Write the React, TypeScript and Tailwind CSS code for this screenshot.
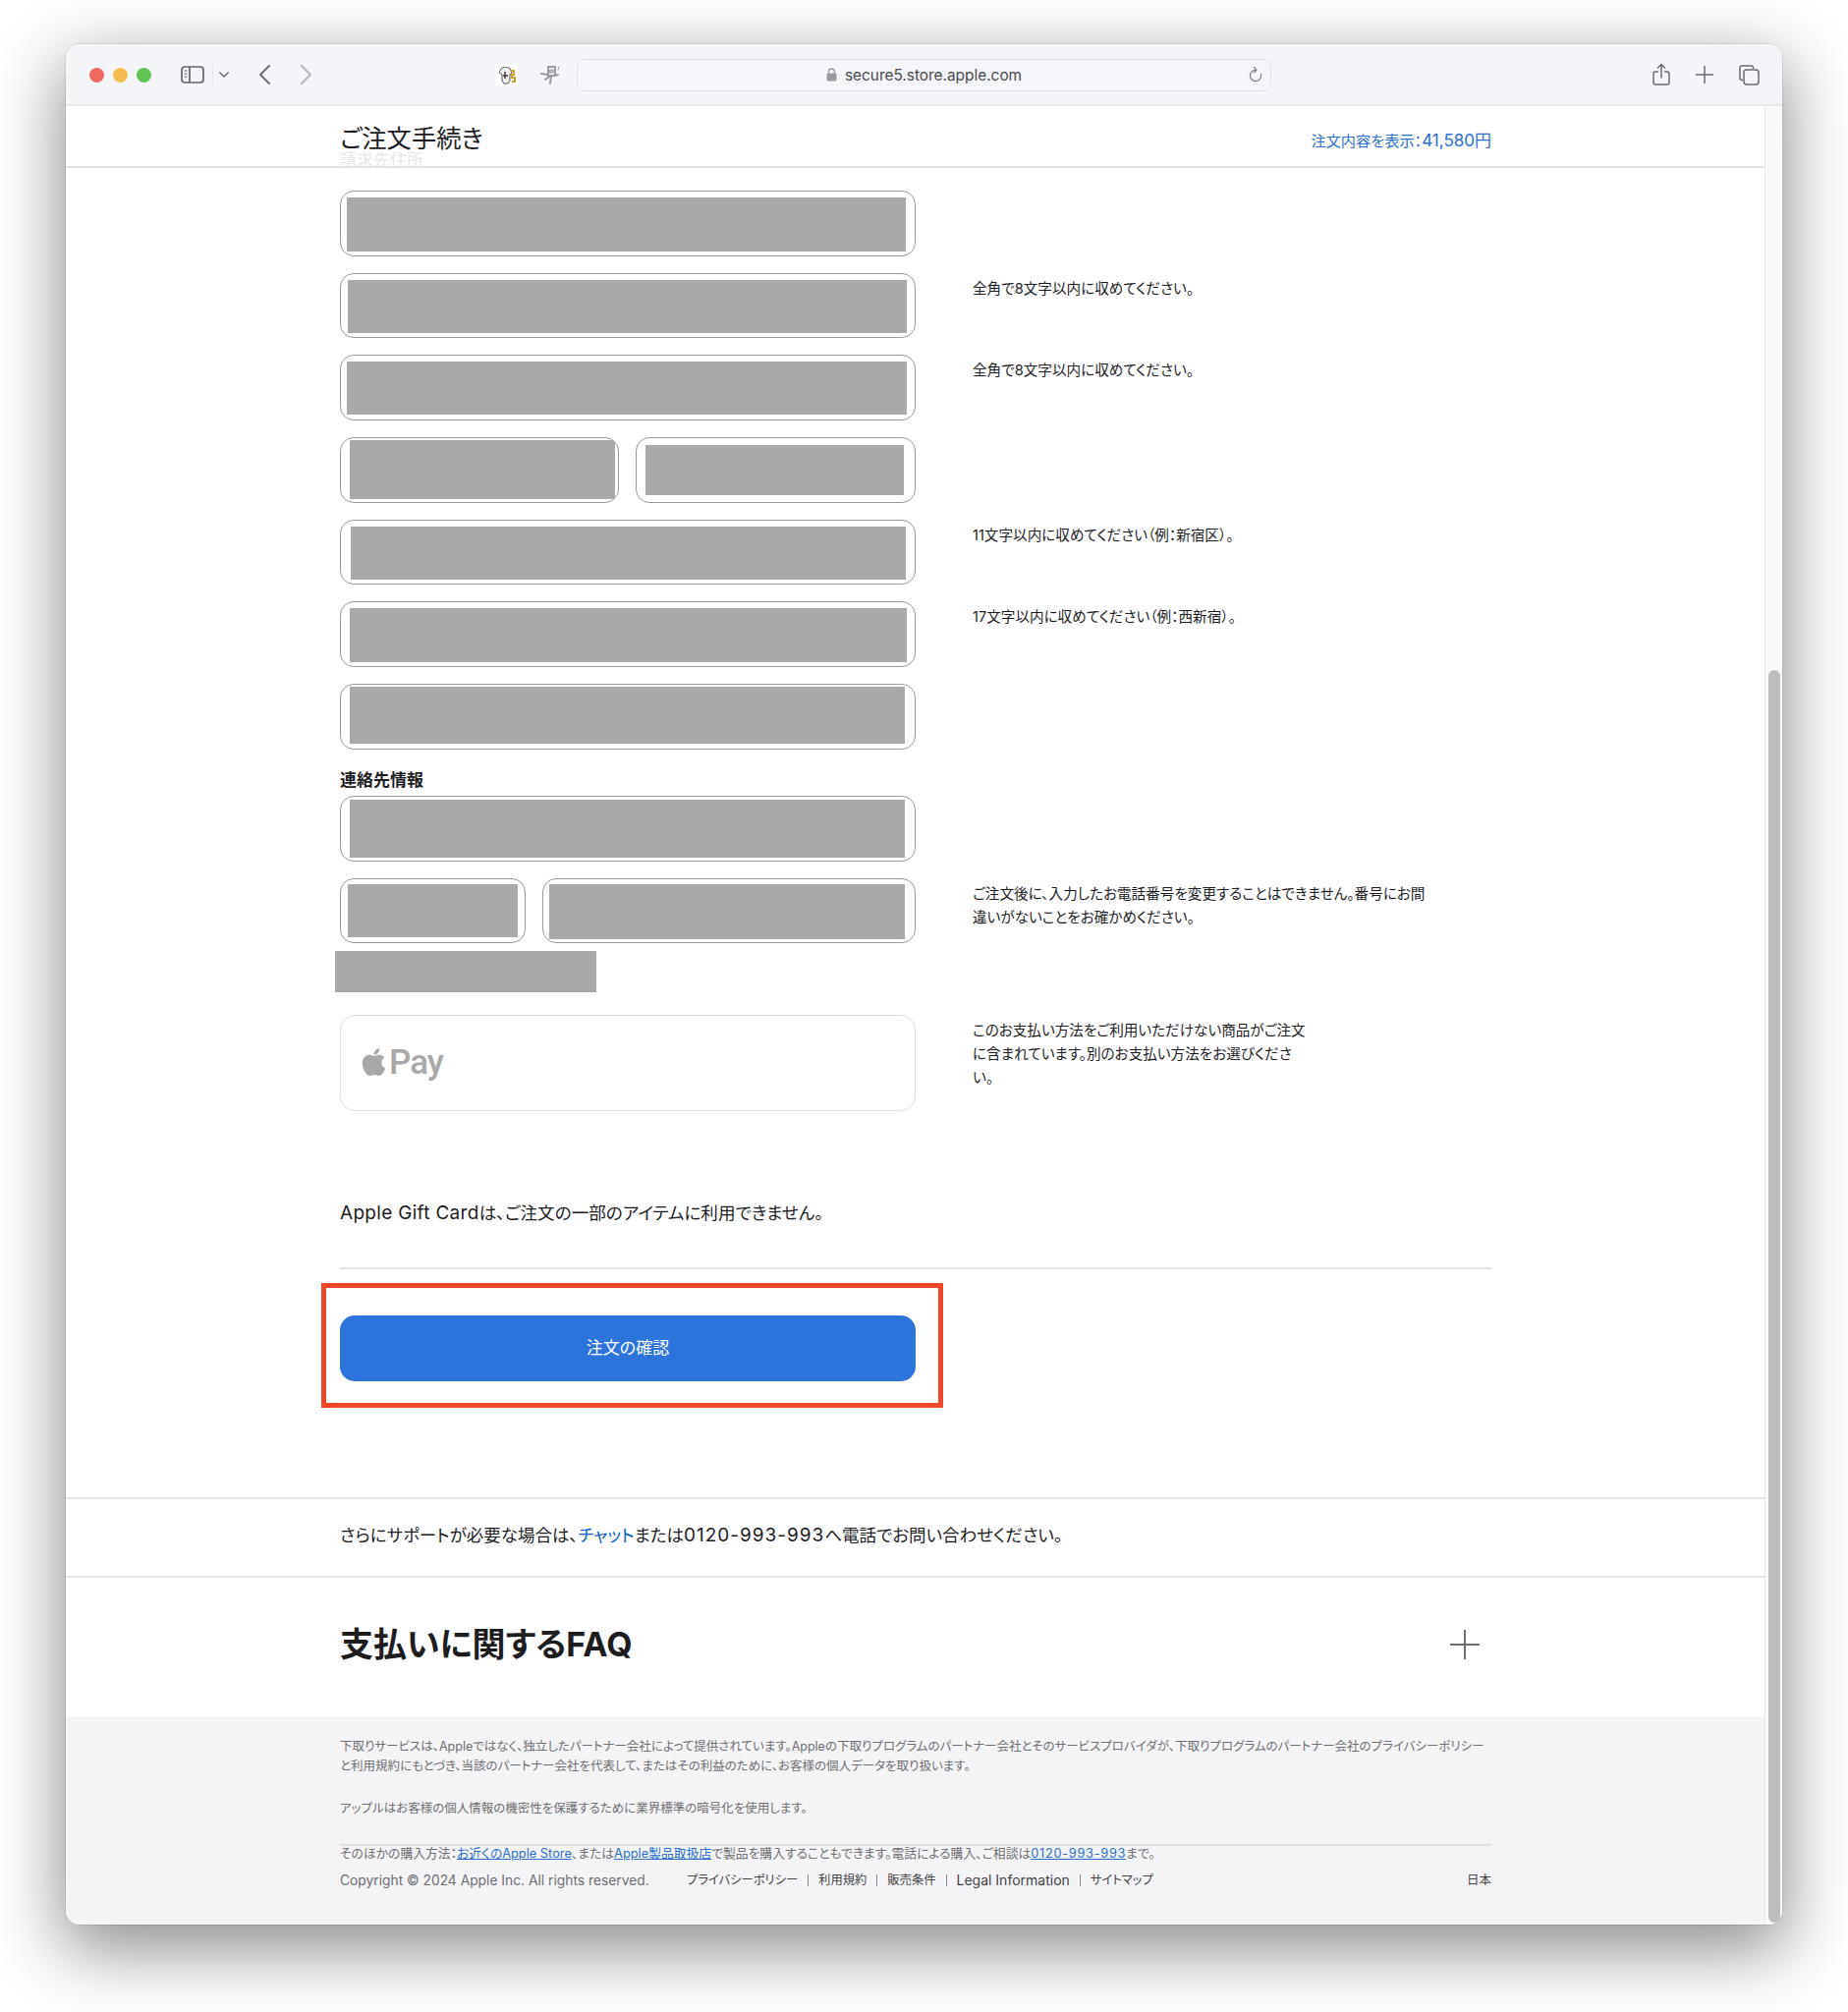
import { FaApple } from 'react-icons/fa'

const fields = [
  { note: '', parts: [{ outer: 'w-full', inner: 'ml-[6px] mt-[6px] w-[569px] h-[55px]' }] },
  { note: '全角で8文字以内に収めてください。', parts: [{ outer: 'w-full', inner: 'ml-[7px] mt-[6px] w-[569px] h-[54px]' }] },
  { note: '全角で8文字以内に収めてください。', parts: [{ outer: 'w-full', inner: 'ml-[6px] mt-[6px] w-[570px] h-[54px]' }] },
  {
    note: '',
    parts: [
      { outer: 'w-[284px]', inner: 'ml-[9px] mt-[2px] w-[270px] h-[60px]' },
      { outer: 'w-[285px]', inner: 'ml-[9px] mt-[7px] w-[263px] h-[51px]' },
    ],
  },
  { note: '11文字以内に収めてください（例：新宿区）。', parts: [{ outer: 'w-full', inner: 'ml-[10px] mt-[6px] w-[565px] h-[54px]' }] },
  { note: '17文字以内に収めてください（例：西新宿）。', parts: [{ outer: 'w-full', inner: 'ml-[9px] mt-[6px] w-[567px] h-[55px]' }] },
  { note: '', parts: [{ outer: 'w-full', inner: 'ml-[9px] mt-[2px] w-[565px] h-[58px]' }] },
]

const contactFields = [
  { note: '', parts: [{ outer: 'w-full', inner: 'ml-[9px] mt-[3px] w-[565px] h-[59px]' }] },
  {
    note: 'ご注文後に、入力したお電話番号を変更することはできません。番号にお間\n違いがないことをお確かめください。',
    parts: [
      { outer: 'w-[189px]', inner: 'ml-[7px] mt-[5px] w-[173px] h-[54px]' },
      { outer: 'w-[380px]', inner: 'ml-[6px] mt-[5px] w-[362px] h-[56px]' },
    ],
  },
]

type Field = (typeof fields)[number]

function FieldRow({ field }: { field: Field }) {
  return (
    <div className="grid grid-cols-[586px_1fr] gap-x-[58px]">
      <div className="flex gap-[17px] h-[66.7px]">
        {field.parts.map((part, i) => (
          <div key={i} className={`${part.outer} h-full rounded-[14px] border-[1.5px] border-[#999999] overflow-hidden`}>
            <div className={`${part.inner} bg-[#a9a9a9]`} />
          </div>
        ))}
      </div>
      <p className="pt-[4px] text-[14.6px] leading-[24px] text-[#1d1d1f] whitespace-pre-line">{field.note}</p>
    </div>
  )
}

function SidebarIcon() {
  return (
    <svg width="24" height="18" viewBox="0 0 24 18" fill="none" stroke="#636366" strokeWidth="1.7">
      <rect x="1" y="1" width="22" height="16" rx="3" />
      <path d="M9 1v16" />
      <path d="M3.5 5h3M3.5 8h3M3.5 11h3" strokeWidth="1.2" />
    </svg>
  )
}

function Chevron({ dir, color, w, h }: { dir: 'left' | 'right' | 'down'; color: string; w: number; h: number }) {
  const d = dir === 'left' ? 'M11 1 2 10l9 9' : dir === 'right' ? 'M1 1l9 9-9 9' : 'M1 1l5 5 5-5'
  const box = dir === 'down' ? '0 0 12 7' : '0 0 12 20'
  return (
    <svg width={w} height={h} viewBox={box} fill="none" stroke={color} strokeWidth="1.8" strokeLinecap="round" strokeLinejoin="round">
      <path d={d} />
    </svg>
  )
}

function DogExtension() {
  return (
    <svg width="23" height="23" viewBox="0 0 23 23" className="bg-white">
      <path d="M6 5c2-2 7-2 9 0l2 4-2 2v6l-2 3H9l-2-3v-6L4 9z" fill="#f4f4f4" stroke="#555" strokeWidth="1" />
      <path d="M10 8v7M8 12h5" stroke="#333" strokeWidth="1.4" />
      <path d="M16 7h3v4h-2v3h3v4h-3" fill="none" stroke="#c9a227" strokeWidth="2" />
    </svg>
  )
}

function RunnerExtension() {
  return (
    <svg width="21" height="20" viewBox="0 0 21 20" fill="none" stroke="#9b9b9e" strokeLinecap="round">
      <path d="M8 2h7v9H8z" strokeWidth="2" />
      <path d="M10 5h3v3h-3z" fill="#c4c4c6" strokeWidth="1" />
      <path d="M8 10 1 9M11 11l-1 8M9 12 5 15M13 11l5-1" strokeWidth="2" />
      <path d="M19 2l-1 3" strokeWidth="1" />
    </svg>
  )
}

function LockIcon() {
  return (
    <svg width="11" height="14" viewBox="0 0 11 14">
      <path d="M2.5 6V4a3 3 0 0 1 6 0v2" fill="none" stroke="#9a9a9d" strokeWidth="1.3" />
      <rect x="0.5" y="5.5" width="10" height="8" rx="1.5" fill="#9a9a9d" />
    </svg>
  )
}

function ReloadIcon() {
  return (
    <svg width="14" height="18" viewBox="0 0 14 18" fill="none" stroke="#7c7c80" strokeWidth="1.2" strokeLinecap="round" strokeLinejoin="round">
      <path d="M7.5 4.4A5.6 5.6 0 1 0 12.4 8.4" />
      <path d="M5.5 1.5 8 4.4 5.2 6.8" />
    </svg>
  )
}

function ShareIcon() {
  return (
    <svg width="18" height="24" viewBox="0 0 18 24" fill="none" stroke="#6b6b6e" strokeWidth="1.5" strokeLinecap="round" strokeLinejoin="round">
      <path d="M5.5 9H3a2 2 0 0 0-2 2v9a2 2 0 0 0 2 2h12a2 2 0 0 0 2-2v-9a2 2 0 0 0-2-2h-2.5" />
      <path d="M9 15V1.5M5.5 5 9 1.5 12.5 5" />
    </svg>
  )
}

function PlusIcon({ size, color, width }: { size: number; color: string; width: number }) {
  return (
    <svg width={size} height={size} viewBox="0 0 18 18" fill="none" stroke={color} strokeWidth={width}>
      <path d="M9 0v18M0 9h18" />
    </svg>
  )
}

function TabsIcon() {
  return (
    <svg width="21" height="21" viewBox="0 0 21 21" fill="none" stroke="#6b6b6e" strokeWidth="1.5">
      <path d="M4 15.5H3a2 2 0 0 1-2-2V3a2 2 0 0 1 2-2h9.5a2 2 0 0 1 2 2v1" />
      <rect x="5" y="5" width="15" height="15" rx="3" />
    </svg>
  )
}

function Toolbar() {
  return (
    <div className="flex items-center shrink-0 h-[63px] pt-[1px] bg-[#f4f5f9] border-b-[2px] border-[#e9e9ec]">
      <div className="flex gap-[9px] ml-[24px]">
        <span className="w-[15px] h-[15px] rounded-full bg-[#ee6a5f]" />
        <span className="w-[15px] h-[15px] rounded-full bg-[#f5bd4f]" />
        <span className="w-[15px] h-[15px] rounded-full bg-[#61c454]" />
      </div>
      <div className="ml-[30px] flex items-center">
        <SidebarIcon />
      </div>
      <div className="ml-[8px] w-px h-[22px] bg-[#e6e6ea]" />
      <div className="ml-[6px] flex">
        <Chevron dir="down" color="#6b6b6e" w={10} h={6} />
      </div>
      <div className="ml-[30px] flex">
        <Chevron dir="left" color="#6b6b6e" w={12} h={20} />
      </div>
      <div className="ml-[31px] flex">
        <Chevron dir="right" color="#b4b4b8" w={12} h={20} />
      </div>
      <div className="ml-[186px] flex">
        <DogExtension />
      </div>
      <div className="ml-[23px] flex">
        <RunnerExtension />
      </div>
      <div className="ml-[16px] w-[707px] h-[33px] rounded-[8px] border-[1.5px] border-[#e0e1e6] bg-[#f5f6fa] flex items-center justify-center relative">
        <LockIcon />
        <span className="ml-[8px] mt-[1px] text-[15.4px] text-[#4a4a4d]">secure5.store.apple.com</span>
        <div className="absolute right-[8px] top-[6px] flex">
          <ReloadIcon />
        </div>
      </div>
      <div className="ml-[388px] flex">
        <ShareIcon />
      </div>
      <div className="ml-[26px] flex">
        <PlusIcon size={18} color="#6b6b6e" width={1.5} />
      </div>
      <div className="ml-[26px] flex">
        <TabsIcon />
      </div>
    </div>
  )
}

export default function App() {
  return (
    <div className="h-[2048px] w-[1881px] bg-white pl-[67px] pt-[45px] overflow-hidden font-['Inter','Noto_Sans_CJK_JP',sans-serif] [font-feature-settings:'palt'] text-[#1d1d1f]">
      <div className="w-[1747px] h-[1914px] rounded-[14px] overflow-hidden bg-white shadow-[0_0_0_1px_rgba(0,0,0,0.08),0_22px_70px_4px_rgba(0,0,0,0.45)] flex flex-col">
        <Toolbar />
        <div className="flex flex-1 min-h-0">
          <main className="w-[1729px] flex flex-col">
            <header className="relative h-[63px] border-b-[2px] border-[#e3e3e3] overflow-hidden shrink-0 pl-[279px] pr-[278px] flex items-start justify-between">
              <h1 className="text-[25.3px] leading-[32px] mt-[17px] text-[#1d1d1f]">ご注文手続き</h1>
              <a className="text-[15.2px] leading-[20px] mt-[25px] text-[#2a6fd0]">
                注文内容を表示：<span className="text-[17px]">41,580円</span>
              </a>
              <span className="absolute left-[279px] top-[43px] text-[17px] leading-[24px] text-[#e6e6e6]">請求先住所</span>
            </header>

            <section className="pl-[279px] pt-[23px]">
              <div className="flex flex-col gap-[17px]">
                {fields.map((field, i) => (
                  <FieldRow key={i} field={field} />
                ))}
              </div>
              <h2 className="mt-[19px] mb-[4px] text-[17px] leading-[24px] font-bold text-[#1d1d1f]">連絡先情報</h2>
              <div className="flex flex-col gap-[17px]">
                {contactFields.map((field, i) => (
                  <FieldRow key={i} field={field} />
                ))}
              </div>
              <div className="ml-[-5px] mt-[8px] w-[266px] h-[42px] bg-[#a9a9a9]" />

              <div className="mt-[23px] grid grid-cols-[586px_1fr] gap-x-[58px]">
                <div className="h-[98px] rounded-[15px] border-[1.5px] border-[#dedede] flex items-center pl-[20px] text-[#a8a8a8]">
                  <FaApple className="w-[27px] h-[32px] mb-[3px]" />
                  <span className="ml-[2px] text-[35px] leading-[40px] mb-[1px] font-medium tracking-[-1px] font-['Roboto',sans-serif]">Pay</span>
                </div>
                <p className="pt-[4px] text-[14.6px] leading-[24px] text-[#1d1d1f] whitespace-nowrap">
                  このお支払い方法をご利用いただけない商品がご注文
                  <br />
                  に含まれています。別のお支払い方法をお選びくださ
                  <br />
                  い。
                </p>
              </div>

              <p className="mt-[90px] text-[17.6px] leading-[28px]">
                <span className="text-[19px] tracking-[0.3px]">Apple Gift Card</span>は、ご注文の一部のアイテムに利用できません。
              </p>
              <div className="mt-[41px] w-[1172px] h-[2px] bg-[#e3e3e3]" />

              <div className="relative mt-[47px] w-[586px]">
                <button className="w-full h-[67px] rounded-[15px] bg-[#2c74dc] text-white text-[17px]">注文の確認</button>
                <div className="absolute left-[-19px] top-[-33px] w-[633px] h-[127px] border-[5px] border-[#f0472a]" />
              </div>
            </section>

            <div className="mt-[118px] h-[82px] border-y-[2px] border-[#e3e3e3] pl-[279px] pb-[3px] flex items-center text-[17.5px]">
              <p>
                さらにサポートが必要な場合は、<a className="text-[#0a5fc4]">チャット</a>または<span className="text-[19px] tracking-[1px]">0120-993-993</span>へ電話でお問い合わせください。
              </p>
            </div>

            <div className="h-[141px] pl-[279px] pr-[290px] flex items-center justify-between shrink-0">
              <h2 className="text-[34px] font-bold text-[#1d1d1f] mb-[6px]">支払いに関するFAQ</h2>
              <div className="flex mb-[5px]">
                <PlusIcon size={30} color="#6e6e73" width={1.2} />
              </div>
            </div>

            <footer className="flex-1 bg-[#f4f4f6] pl-[279px] pr-[278px] pt-[21px] text-[12.5px] text-[#6e6e73]">
              <p className="leading-[20px] whitespace-nowrap">
                下取りサービスは、Appleではなく、独立したパートナー会社によって提供されています。Appleの下取りプログラムのパートナー会社とそのサービスプロバイダが、下取りプログラムのパートナー会社のプライバシーポリシー
                <br />
                と利用規約にもとづき、当該のパートナー会社を代表して、またはその利益のために、お客様の個人データを取り扱います。
              </p>
              <p className="mt-[23px] leading-[20px]">アップルはお客様の個人情報の機密性を保護するために業界標準の暗号化を使用します。</p>
              <div className="mt-[26px] h-[2px] bg-[#e0e0e2]" />
              <p className="leading-[16px] text-[12.8px] whitespace-nowrap">
                そのほかの購入方法：<a className="text-[#2a6fd0] underline">お近くのApple Store</a>、または<a className="text-[#2a6fd0] underline">Apple製品取扱店</a>で製品を購入することもできます。電話による購入、ご相談は<a className="text-[#2a6fd0] underline tracking-[0.7px]">0120-993-993</a>まで。
              </p>
              <div className="mt-[9px] flex items-center justify-between leading-[20px]">
                <div className="flex items-center">
                  <span className="text-[13.8px] w-[353px]">Copyright © 2024 Apple Inc. All rights reserved.</span>
                  <div className="flex items-center text-[#424245] text-[12.3px]">
                    <a>プライバシーポリシー</a>
                    <span className="mx-[10px] w-px h-[12px] bg-[#8a8a8e]" />
                    <a>利用規約</a>
                    <span className="mx-[10px] w-px h-[12px] bg-[#8a8a8e]" />
                    <a>販売条件</a>
                    <span className="mx-[10px] w-px h-[12px] bg-[#8a8a8e]" />
                    <a className="text-[14px]">Legal Information</a>
                    <span className="mx-[10px] w-px h-[12px] bg-[#8a8a8e]" />
                    <a>サイトマップ</a>
                  </div>
                </div>
                <span className="text-[#424245]">日本</span>
              </div>
            </footer>
          </main>

          <aside className="w-[18px] border-l-[1px] border-[#e8e8ea] bg-[#fafafa] flex flex-col justify-end pb-[2px] pl-[3px]">
            <div className="w-[12px] h-[1275px] rounded-full bg-[#bdbdbd]" />
          </aside>
        </div>
      </div>
    </div>
  )
}
